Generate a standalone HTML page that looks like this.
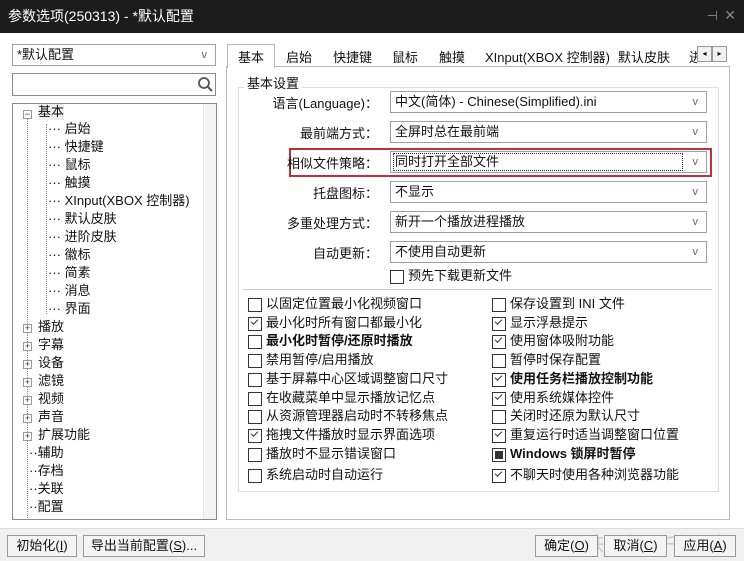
<!DOCTYPE html>
<html><head><meta charset="utf-8"><style>
*{box-sizing:border-box;margin:0;padding:0}
body{width:744px;height:561px;position:relative;overflow:hidden;background:#fff;font-family:"Liberation Sans","Noto Sans CJK SC",sans-serif;font-size:12.5px;color:#111}
.a{position:absolute;white-space:nowrap}
.title{left:0;top:0;width:744px;height:33px;background:#1c1c1c;color:#fff;font-size:14px;line-height:33px;padding-left:8px}
.box{border:1px solid #8a8a8a;background:#fff}
.cb{position:absolute;border:1px solid #a0a0a0;background:#fff;height:22px;line-height:20px;padding-left:4px;font-size:13px}
.cb:after{content:"v";position:absolute;right:8px;top:0;color:#666;font-size:11px}
.lbl{position:absolute;font-size:13px;text-align:right;width:140px}
.ck{position:absolute;font-size:13px;line-height:16px;padding-left:18px}
.ck:before{content:"";position:absolute;left:0;top:2px;width:12px;height:12px;border:1px solid #333;background:#fff}
.ck.c:after{content:"";position:absolute;left:3px;top:4px;width:6px;height:3px;border-left:1.5px solid #333;border-bottom:1.5px solid #333;transform:rotate(-45deg)}
.ck.f:after{content:"";position:absolute;left:3px;top:5px;width:8px;height:8px;background:#333}
.b{font-weight:bold}
.btn{position:absolute;height:22px;border:1px solid #999;background:#f4f4f4;text-align:center;line-height:20px;font-size:13px}
.tab{position:absolute;top:47px;font-size:13px}
.ti{position:absolute;font-size:13px;line-height:16px}
.pm{position:absolute;width:9px;height:9px;border:1px solid #999;background:#fff;font-size:9px;line-height:7px;text-align:center;color:#333}
</style></head><body>
<div class="a title">参数选项(250313) - *默认配置</div>
<div class="a" style="right:26px;top:8px;color:#888;font-size:13px">⊣</div>
<div class="a" style="right:8px;top:7px;color:#888;font-size:14px">✕</div>

<div class="cb" style="left:12px;top:44px;width:204px">*默认配置</div>
<div class="a box" style="left:12px;top:73px;width:204px;height:23px"></div>
<svg class="a" style="left:197px;top:76px" width="17" height="17"><circle cx="7" cy="7" r="5" fill="none" stroke="#555" stroke-width="1.8"/><line x1="11" y1="11" x2="15" y2="15" stroke="#555" stroke-width="2"/></svg>

<div class="a box" style="left:12px;top:103px;width:205px;height:417px"></div>
<div class="a" style="left:203px;top:104px;width:13px;height:415px;background:#f4f4f4;border-left:1px solid #e4e4e4"></div>
<div class="a" style="left:27px;top:118px;height:400px;border-left:1px dotted #888"></div>
<div class="a" style="left:46px;top:124px;height:190px;border-left:1px dotted #888"></div>
<div class="pm" style="left:23px;top:110px">−</div>
<div class="ti" style="left:38px;top:104px;background:#eee">基本</div>
<div class="ti" style="left:48px;top:121px">··· 启始</div>
<div class="ti" style="left:48px;top:139px">··· 快捷键</div>
<div class="ti" style="left:48px;top:157px">··· 鼠标</div>
<div class="ti" style="left:48px;top:175px">··· 触摸</div>
<div class="ti" style="left:48px;top:193px">··· XInput(XBOX 控制器)</div>
<div class="ti" style="left:48px;top:211px">··· 默认皮肤</div>
<div class="ti" style="left:48px;top:229px">··· 进阶皮肤</div>
<div class="ti" style="left:48px;top:247px">··· 徽标</div>
<div class="ti" style="left:48px;top:265px">··· 简素</div>
<div class="ti" style="left:48px;top:283px">··· 消息</div>
<div class="ti" style="left:48px;top:301px">··· 界面</div>
<div class="pm" style="left:23px;top:324px">+</div><div class="ti" style="left:38px;top:319px">播放</div>
<div class="pm" style="left:23px;top:342px">+</div><div class="ti" style="left:38px;top:337px">字幕</div>
<div class="pm" style="left:23px;top:360px">+</div><div class="ti" style="left:38px;top:355px">设备</div>
<div class="pm" style="left:23px;top:378px">+</div><div class="ti" style="left:38px;top:373px">滤镜</div>
<div class="pm" style="left:23px;top:396px">+</div><div class="ti" style="left:38px;top:391px">视频</div>
<div class="pm" style="left:23px;top:414px">+</div><div class="ti" style="left:38px;top:409px">声音</div>
<div class="pm" style="left:23px;top:432px">+</div><div class="ti" style="left:38px;top:427px">扩展功能</div>
<div class="ti" style="left:29px;top:445px">··辅助</div>
<div class="ti" style="left:29px;top:463px">··存档</div>
<div class="ti" style="left:29px;top:481px">··关联</div>
<div class="ti" style="left:29px;top:499px">··配置</div>

<div class="a" style="left:226px;top:66px;width:504px;height:454px;border:1px solid #bbb;background:#fff"></div>
<div class="a" style="left:227px;top:44px;width:48px;height:24px;border:1px solid #bbb;border-bottom:none;background:#fff"></div>
<div class="tab" style="left:238px">基本</div>
<div class="tab" style="left:286px">启始</div>
<div class="tab" style="left:333px">快捷键</div>
<div class="tab" style="left:392px">鼠标</div>
<div class="tab" style="left:439px">触摸</div>
<div class="tab" style="left:485px">XInput(XBOX 控制器)</div>
<div class="tab" style="left:618px">默认皮肤</div>
<div class="tab" style="left:689px;width:8px;overflow:hidden">进</div>
<div class="a" style="left:697px;top:46px;width:15px;height:16px;border:1px solid #999;background:#f0f0f0;font-size:8px;text-align:center;line-height:14px">◂</div>
<div class="a" style="left:712px;top:46px;width:15px;height:16px;border:1px solid #999;background:#f0f0f0;font-size:8px;text-align:center;line-height:14px">▸</div>

<div class="a" style="left:238px;top:87px;width:481px;height:405px;border:1px solid #ddd"></div>
<div class="a" style="left:244px;top:73px;background:#fff;padding:0 3px;font-size:13px">基本设置</div>

<div class="lbl" style="left:238px;top:93px">语言(Language)：</div>
<div class="cb" style="left:390px;top:91px;width:317px">中文(简体) - Chinese(Simplified).ini</div>
<div class="lbl" style="left:238px;top:123px">最前端方式：</div>
<div class="cb" style="left:390px;top:121px;width:317px">全屏时总在最前端</div>
<div class="a" style="left:289px;top:148px;width:423px;height:29px;border:2px solid #c0303a"></div>
<div class="lbl" style="left:238px;top:153px">相似文件策略：</div>
<div class="cb" style="left:390px;top:151px;width:317px"><span style="border:1px dotted #333;display:inline-block;width:290px;height:18px;line-height:16px;margin-left:-2px;padding-left:1px">同时打开全部文件</span></div>
<div class="lbl" style="left:238px;top:183px">托盘图标：</div>
<div class="cb" style="left:390px;top:181px;width:317px">不显示</div>
<div class="lbl" style="left:238px;top:213px">多重处理方式：</div>
<div class="cb" style="left:390px;top:211px;width:317px">新开一个播放进程播放</div>
<div class="lbl" style="left:238px;top:243px">自动更新：</div>
<div class="cb" style="left:390px;top:241px;width:317px">不使用自动更新</div>
<div class="ck" style="left:390px;top:268px">预先下载更新文件</div>
<div class="a" style="left:243px;top:289px;width:469px;border-top:1px solid #ccc"></div>

<div class="ck" style="left:248px;top:296px">以固定位置最小化视频窗口</div>
<div class="ck c" style="left:248px;top:315px">最小化时所有窗口都最小化</div>
<div class="ck b" style="left:248px;top:333px">最小化时暂停/还原时播放</div>
<div class="ck" style="left:248px;top:352px">禁用暂停/启用播放</div>
<div class="ck" style="left:248px;top:371px">基于屏幕中心区域调整窗口尺寸</div>
<div class="ck" style="left:248px;top:390px">在收藏菜单中显示播放记忆点</div>
<div class="ck" style="left:248px;top:408px">从资源管理器启动时不转移焦点</div>
<div class="ck c" style="left:248px;top:427px">拖拽文件播放时显示界面选项</div>
<div class="ck" style="left:248px;top:446px">播放时不显示错误窗口</div>
<div class="ck" style="left:248px;top:467px">系统启动时自动运行</div>
<div class="ck" style="left:492px;top:296px">保存设置到 INI 文件</div>
<div class="ck c" style="left:492px;top:315px">显示浮悬提示</div>
<div class="ck c" style="left:492px;top:333px">使用窗体吸附功能</div>
<div class="ck" style="left:492px;top:352px">暂停时保存配置</div>
<div class="ck c b" style="left:492px;top:371px">使用任务栏播放控制功能</div>
<div class="ck c" style="left:492px;top:390px">使用系统媒体控件</div>
<div class="ck" style="left:492px;top:408px">关闭时还原为默认尺寸</div>
<div class="ck c" style="left:492px;top:427px">重复运行时适当调整窗口位置</div>
<div class="ck f b" style="left:492px;top:446px">Windows 锁屏时暂停</div>
<div class="ck c" style="left:492px;top:467px">不聊天时使用各种浏览器功能</div>

<div class="a" style="left:0;top:528px;width:744px;height:33px;background:#f0f0f0;border-top:1px solid #ddd"></div>
<div class="a" style="left:592px;top:528px;font-size:22px;color:rgba(150,150,150,.4)">知乎 @千禺木</div>
<div class="btn" style="left:7px;top:535px;width:70px">初始化(<u>I</u>)</div>
<div class="btn" style="left:83px;top:535px;width:122px">导出当前配置(<u>S</u>)...</div>
<div class="btn" style="left:535px;top:535px;width:63px">确定(<u>O</u>)</div>
<div class="btn" style="left:604px;top:535px;width:63px">取消(<u>C</u>)</div>
<div class="btn" style="left:674px;top:535px;width:62px">应用(<u>A</u>)</div>
</body></html>
